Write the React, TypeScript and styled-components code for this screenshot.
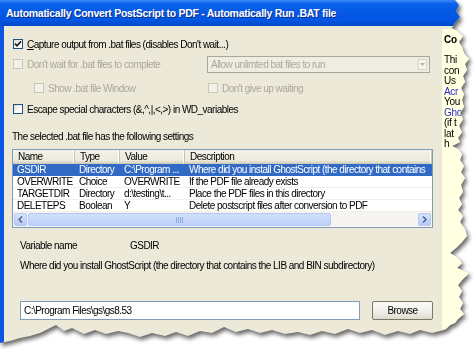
import React from "react";
import styled, { createGlobalStyle } from "styled-components";

const Global = createGlobalStyle`
  html, body { margin: 0; padding: 0; background: #ffffff; }
  body { width: 474px; height: 350px; overflow: hidden; font-family: "Liberation Sans", Arial, sans-serif; }
`;

const rightEdge: [number, number][] = [
  [455, 0], [459, 5], [456, 11], [460, 17], [454, 24], [452, 28], [457, 31], [463, 36], [459, 42], [462, 47],
  [464, 53], [469, 59], [465, 64], [467, 70], [463, 76], [465, 82], [461, 88], [464, 94], [462, 100], [464, 107],
  [460, 113], [463, 119], [459, 126], [462, 132], [458, 138], [460, 142], [452, 146], [458, 149], [462, 154],
  [460, 160], [464, 166], [461, 172], [465, 178], [461, 185], [463, 192], [459, 198], [462, 204], [458, 210],
  [463, 216], [460, 222], [465, 229], [467, 236], [462, 242], [456, 248], [450, 253], [458, 258], [462, 263],
  [457, 268], [469, 273], [463, 279], [458, 285], [462, 291], [459, 297], [463, 303], [460, 309], [464, 314],
  [458, 319], [455, 323], [450, 325], [446, 329], [440, 331],
];
const bottomEdge: [number, number][] = [
  [432, 333], [420, 330], [410, 334], [398, 331], [385, 335], [372, 330], [360, 333], [348, 329], [335, 334],
  [322, 331], [310, 335], [298, 332], [285, 334], [272, 330], [260, 333], [248, 329], [236, 332], [224, 327],
  [212, 333], [200, 331], [188, 336], [176, 332], [165, 336], [152, 333], [140, 337], [128, 333], [118, 331],
  [106, 334], [95, 330], [84, 334], [72, 328], [64, 331], [56, 325], [48, 329], [40, 333], [30, 336], [20, 338],
  [10, 341], [0, 343],
];
const torn = `polygon(0px 0px, ${[...rightEdge, ...bottomEdge].map(([x, y]) => `${x}px ${y}px`).join(", ")})`;

const Shadow = styled.div`
  width: 474px;
  height: 350px;
  filter: drop-shadow(2px 3px 2px rgba(0, 0, 0, 0.6));
`;

const Window = styled.div`
  width: 472px;
  height: 346px;
  background: #ece9d8;
  clip-path: ${torn};
  display: flex;
  flex-direction: column;
`;

const TitleBar = styled.div`
  height: 26px;
  flex: none;
  display: flex;
  align-items: center;
  padding-left: 6px;
  background: linear-gradient(#3d8cf7 0%, #0b62ea 14%, #0458e4 50%, #0256e2 80%, #0047c9 100%);
  color: #ffffff;
  font-weight: bold;
  font-size: 10.5px;
  letter-spacing: -0.28px;
  text-shadow: 1px 1px 0 #0b2d8f;
  white-space: nowrap;
`;

const Body = styled.div`
  flex: 1;
  display: flex;
  border-left: 4px solid #0a55e2;
`;

const MainPane = styled.div`
  width: 438px;
  flex: none;
  display: flex;
  flex-direction: column;
  padding: 11px 0 0 8px;
  box-sizing: border-box;
  font-size: 10px;
  letter-spacing: -0.52px;
`;

const HelpPane = styled.div`
  flex: 1;
  margin-top: 3px;
  background: #ffffe1;
  padding: 5px 0 0 2px;
  font-size: 10px;
  line-height: 10.5px;
  letter-spacing: -0.3px;
  white-space: nowrap;
`;

const HelpTitle = styled.div`
  font-weight: bold;
  line-height: 11px;
  margin-bottom: 10px;
`;

const HelpLine = styled.div<{ $link?: boolean }>`
  color: ${(p) => (p.$link ? "#2d2dd6" : "#000")};
`;

const Row = styled.div<{ $mt: number; $h: number; $indent?: number }>`
  display: flex;
  align-items: center;
  gap: 4px;
  margin-top: ${(p) => p.$mt}px;
  height: ${(p) => p.$h}px;
  padding-left: ${(p) => p.$indent ?? 1}px;
  white-space: nowrap;
`;

const SplitRow = styled.div<{ $mt: number; $h: number }>`
  display: grid;
  grid-template-columns: 195px 223px;
  align-items: center;
  margin-top: ${(p) => p.$mt}px;
  height: ${(p) => p.$h}px;
`;

const Cell = styled.div<{ $indent?: number }>`
  display: flex;
  align-items: center;
  gap: 4px;
  padding-left: ${(p) => p.$indent ?? 0}px;
  white-space: nowrap;
`;

const Box = styled.span<{ $disabled?: boolean }>`
  width: 10px;
  height: 10px;
  box-sizing: border-box;
  flex: none;
  border: 1px solid ${(p) => (p.$disabled ? "#c9c7ba" : "#1c5180")};
  background: ${(p) => (p.$disabled ? "#f2f1ea" : "linear-gradient(135deg, #dcdcd7, #ffffff 70%)")};
  display: flex;
  align-items: center;
  justify-content: center;
`;

const Label = styled.span<{ $disabled?: boolean }>`
  color: ${(p) => (p.$disabled ? "#aca899" : "#000")};
`;

const U = styled.span`
  text-decoration: underline;
`;

const Check = ({ checked, disabled }: { checked?: boolean; disabled?: boolean }) => (
  <Box $disabled={disabled}>
    {checked && (
      <svg width="8" height="8" viewBox="0 0 8 8">
        <path d="M1 3.6 L3 5.8 L7 1.4" fill="none" stroke="#1a1a1a" strokeWidth="1.6" />
      </svg>
    )}
  </Box>
);

const Select = styled.div`
  height: 17px;
  box-sizing: border-box;
  border: 1px solid #a9a89e;
  background: #efede3;
  display: flex;
  align-items: center;
  justify-content: space-between;
  padding: 0 2px 0 3px;
  color: #aca899;
`;

const SelectArrow = styled.span`
  width: 9px;
  height: 11px;
  box-sizing: border-box;
  border: 1px solid #d6d4ca;
  background: #f6f5f0;
  display: flex;
  align-items: center;
  justify-content: center;
`;

const Caption = styled.div<{ $mt: number }>`
  margin-top: ${(p) => p.$mt}px;
  height: 12px;
  line-height: 12px;
  white-space: nowrap;
`;

const List = styled.div`
  margin-top: 6px;
  width: 421px;
  height: 79px;
  box-sizing: border-box;
  border: 1px solid #7f9db9;
  background: #ffffff;
  display: flex;
  flex-direction: column;
  overflow: hidden;
`;

const cols = "62px 45px 65px 1fr";

const Header = styled.div`
  display: grid;
  grid-template-columns: ${cols};
  height: 14px;
  flex: none;
  background: linear-gradient(#f3f2ea, #ebeadb 80%, #d6d2c2);
  border-bottom: 1px solid #d0cdbd;
  box-sizing: border-box;
`;

const HeadCell = styled.div`
  padding-left: 5px;
  line-height: 13px;
  border-right: 1px solid #c7c5b2;
  box-shadow: inset -1px 0 0 #ffffff;
  white-space: nowrap;
  overflow: hidden;
`;

const DataRow = styled.div<{ $selected?: boolean }>`
  display: grid;
  grid-template-columns: ${cols};
  height: 12px;
  line-height: 12px;
  flex: none;
  background: ${(p) => (p.$selected ? "#316ac5" : "#ffffff")};
  color: ${(p) => (p.$selected ? "#ffffff" : "#000")};
  box-shadow: inset 0 -1px 0 ${(p) => (p.$selected ? "#316ac5" : "#f1efe6")};
`;

const DataCell = styled.div`
  padding-left: 4px;
  white-space: nowrap;
  overflow: hidden;
`;

const HScroll = styled.div`
  margin-top: auto;
  height: 15px;
  flex: none;
  display: flex;
  align-items: center;
  gap: 1px;
  background: #f6f5f1;
  padding: 0 1px;
`;

const ScrollBtn = styled.span`
  width: 13px;
  height: 13px;
  flex: none;
  box-sizing: border-box;
  border-radius: 2px;
  border: 1px solid #b3c8f5;
  background: linear-gradient(#d7e3fd, #b7cbf7);
  display: flex;
  align-items: center;
  justify-content: center;
`;

const Thumb = styled.span`
  width: 303px;
  height: 13px;
  box-sizing: border-box;
  border-radius: 2px;
  border: 1px solid #b3c8f5;
  background: linear-gradient(#d2dffb, #bdd0f9);
  display: flex;
  align-items: center;
  justify-content: center;
  gap: 1px;
`;

const Grip = styled.span`
  width: 1px;
  height: 6px;
  background: #8fa9e4;
`;

const Track = styled.span`
  flex: 1;
`;

const FieldRow = styled.div<{ $mt: number }>`
  margin-top: ${(p) => p.$mt}px;
  height: 12px;
  line-height: 12px;
  padding-left: 8px;
  display: flex;
  white-space: nowrap;
`;

const FieldName = styled.span`
  width: 110px;
`;

const InputRow = styled.div`
  margin-top: 28px;
  padding-left: 8px;
  display: flex;
  gap: 12px;
  align-items: center;
`;

const PathInput = styled.div`
  width: 340px;
  height: 19px;
  box-sizing: border-box;
  border: 1px solid #7f9db9;
  background: #ffffff;
  padding-left: 3px;
  line-height: 17px;
  white-space: nowrap;
`;

const Button = styled.div`
  width: 61px;
  height: 19px;
  box-sizing: border-box;
  border: 1px solid #7a7868;
  border-radius: 2px;
  background: linear-gradient(#fbfbf8, #efeee7 60%, #dedbcc);
  display: flex;
  align-items: center;
  justify-content: center;
  margin-top: 1px;
`;

const rows = [
  { name: "GSDIR", type: "Directory", value: "C:\\Program ...", desc: "Where did you install GhostScript (the directory that contains" },
  { name: "OVERWRITE", type: "Choice", value: "OVERWRITE", desc: "If the PDF file already exists" },
  { name: "TARGETDIR", type: "Directory", value: "d:\\testing\\t...", desc: "Place the PDF files in this directory" },
  { name: "DELETEPS", type: "Boolean", value: "Y", desc: "Delete postscript files after conversion to PDF" },
];

const helpLines: { text: string; link?: boolean }[] = [
  { text: "Thi" },
  { text: "con" },
  { text: "Us" },
  { text: "Acr", link: true },
  { text: "You" },
  { text: "Ghos", link: true },
  { text: "(if t" },
  { text: "lat" },
  { text: "h" },
];

export default function App() {
  return (
    <>
      <Global />
      <Shadow>
        <Window>
          <TitleBar>Automatically Convert PostScript to PDF - Automatically Run .BAT file</TitleBar>
          <Body>
            <MainPane>
              <Row $mt={0} $h={14}>
                <Check checked />
                <Label>
                  <U>C</U>apture output from .bat files (disables Don't wait...)
                </Label>
              </Row>
              <SplitRow $mt={4} $h={18}>
                <Cell $indent={1}>
                  <Check disabled />
                  <Label $disabled>Don't wait for .bat files to complete</Label>
                </Cell>
                <Select>
                  <span>Allow unlimted bat files to run</span>
                  <SelectArrow>
                    <svg width="5" height="3" viewBox="0 0 5 3">
                      <path d="M0 0 L5 0 L2.5 3 Z" fill="#b4b2a6" />
                    </svg>
                  </SelectArrow>
                </Select>
              </SplitRow>
              <SplitRow $mt={9} $h={12}>
                <Cell $indent={22}>
                  <Check disabled />
                  <Label $disabled>Show .bat file Window</Label>
                </Cell>
                <Cell $indent={1}>
                  <Check disabled />
                  <Label $disabled>Don't give up waiting</Label>
                </Cell>
              </SplitRow>
              <Row $mt={9} $h={12}>
                <Check />
                <Label>Escape special characters (&amp;,^,|,&lt;,&gt;) in WD_variables</Label>
              </Row>
              <Caption $mt={16}>The selected .bat file has the following settings</Caption>
              <List>
                <Header>
                  <HeadCell>Name</HeadCell>
                  <HeadCell>Type</HeadCell>
                  <HeadCell>Value</HeadCell>
                  <HeadCell>Description</HeadCell>
                </Header>
                {rows.map((r, i) => (
                  <DataRow key={r.name} $selected={i === 0}>
                    <DataCell>{r.name}</DataCell>
                    <DataCell>{r.type}</DataCell>
                    <DataCell>{r.value}</DataCell>
                    <DataCell>{r.desc}</DataCell>
                  </DataRow>
                ))}
                <HScroll>
                  <ScrollBtn>
                    <svg width="5" height="7" viewBox="0 0 5 7">
                      <path d="M4 0.5 L1 3.5 L4 6.5" fill="none" stroke="#4d6185" strokeWidth="1.5" />
                    </svg>
                  </ScrollBtn>
                  <Thumb>
                    <Grip />
                    <Grip />
                    <Grip />
                    <Grip />
                  </Thumb>
                  <Track />
                  <ScrollBtn>
                    <svg width="5" height="7" viewBox="0 0 5 7">
                      <path d="M1 0.5 L4 3.5 L1 6.5" fill="none" stroke="#4d6185" strokeWidth="1.5" />
                    </svg>
                  </ScrollBtn>
                </HScroll>
              </List>
              <FieldRow $mt={12}>
                <FieldName>Variable name</FieldName>
                <span>GSDIR</span>
              </FieldRow>
              <FieldRow $mt={8}>
                Where did you install GhostScript (the directory that contains the LIB and BIN subdirectory)
              </FieldRow>
              <InputRow>
                <PathInput>C:\Program Files\gs\gs8.53</PathInput>
                <Button>Browse</Button>
              </InputRow>
            </MainPane>
            <HelpPane>
              <HelpTitle>Co</HelpTitle>
              {helpLines.map((l) => (
                <HelpLine key={l.text} $link={l.link}>
                  {l.text}
                </HelpLine>
              ))}
            </HelpPane>
          </Body>
        </Window>
      </Shadow>
    </>
  );
}
